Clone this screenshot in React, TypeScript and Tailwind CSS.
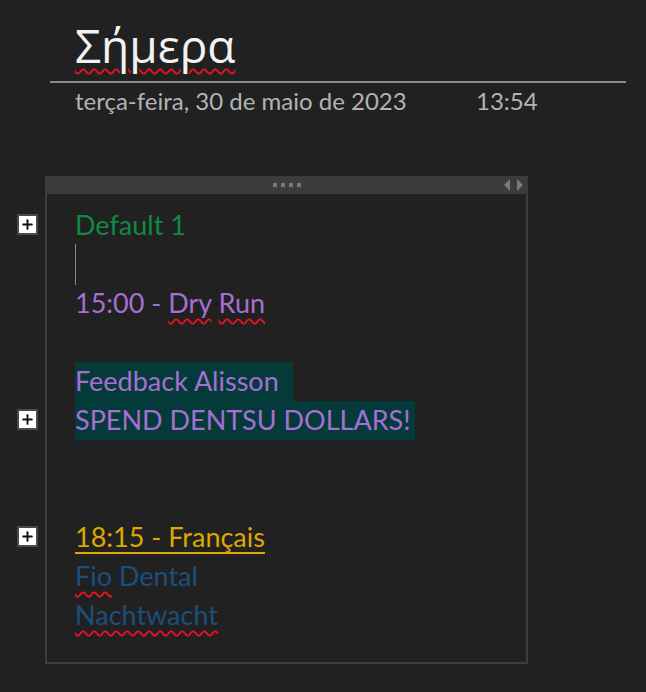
import { Plus } from "lucide-react"

const squiggle = "underline decoration-wavy decoration-[#e81123] decoration-[1.5px] underline-offset-[5px]"

function Handle() {
  return (
    <div className="absolute left-[-58px] top-[8px] flex h-[21px] w-[21px] items-center justify-center border-2 border-[#4a4a4a] bg-white">
      <Plus size={15} strokeWidth={3} color="#111" />
    </div>
  )
}

function Line({ children, handle = false }: { children?: React.ReactNode; handle?: boolean }) {
  return (
    <div className="relative flex h-[39px] items-center">
      {handle && <Handle />}
      {children}
    </div>
  )
}

export default function App() {
  return (
    <div className="h-[692px] w-[646px] overflow-hidden bg-[#212121] font-['Lato','Noto_Sans',sans-serif]">
      {/* Título da página */}
      <div className="ml-[50px] w-[576px] border-b-2 border-[#8c8c8c] pl-[25px] pt-[18px] pb-[9px]">
        <div className="font-['Open_Sans','Noto_Sans',sans-serif] text-[46px] font-normal leading-[54px] text-[#f2f2f2]">
          <span className={squiggle}>Σήμερα</span>
        </div>
      </div>
      <div className="flex pl-[75px] pt-[3px] text-[24px] leading-[30px] text-[#b3b3b3]">
        <span className="w-[401px]">terça-feira, 30 de maio de 2023</span>
        <span>13:54</span>
      </div>

      {/* Contêiner de notas */}
      <div className="ml-[45px] mt-[60px] w-[483px] border-2 border-t-0 border-[#3e3e3e]">
        <div className="relative -mx-[2px] flex h-[18px] items-center justify-center bg-[#3b3b3b]">
          <div className="flex gap-[4px]">
            <span className="h-[4px] w-[4px] bg-[#7a7a7a]" />
            <span className="h-[4px] w-[4px] bg-[#7a7a7a]" />
            <span className="h-[4px] w-[4px] bg-[#7a7a7a]" />
            <span className="h-[4px] w-[4px] bg-[#7a7a7a]" />
          </div>
          <div className="absolute right-[5px] top-[3px] flex gap-[7px]">
            <svg width="6" height="12" viewBox="0 0 6 12"><path d="M6 0 L0 6 L6 12 Z" fill="#7a7a7a" /></svg>
            <svg width="6" height="12" viewBox="0 0 6 12"><path d="M0 0 L6 6 L0 12 Z" fill="#7a7a7a" /></svg>
          </div>
        </div>

        <div className="pl-[28px] pt-[12px] pb-[27px] text-[27px]">
          <Line handle>
            <span className="text-[#0f8a41]">Default 1</span>
          </Line>
          <Line>
            <span className="h-[41px] w-px bg-[#8a8a8a]" />
          </Line>
          <Line>
            <span className="text-[#a56fd4]">
              15:00 - <span className={squiggle}>Dry</span> <span className={squiggle}>Run</span>
            </span>
          </Line>
          <Line />
          <Line>
            <span className="flex h-[39px] items-center bg-[#053a3a] pr-[14px] text-[#a56fd4]">Feedback Alisson</span>
          </Line>
          <Line handle>
            <span className="flex h-[39px] items-center bg-[#053a3a] pr-[4px] text-[#a56fd4]">SPEND DENTSU DOLLARS!</span>
          </Line>
          <Line />
          <Line />
          <Line handle>
            <span className="text-[#dea800] underline decoration-2 underline-offset-[5px]">18:15 - Français</span>
          </Line>
          <Line>
            <span className="text-[#1d4f7b]">
              <span className={squiggle}>Fio</span> Dental
            </span>
          </Line>
          <Line>
            <span className={`text-[#1d4f7b] ${squiggle}`}>Nachtwacht</span>
          </Line>
        </div>
      </div>
    </div>
  )
}
